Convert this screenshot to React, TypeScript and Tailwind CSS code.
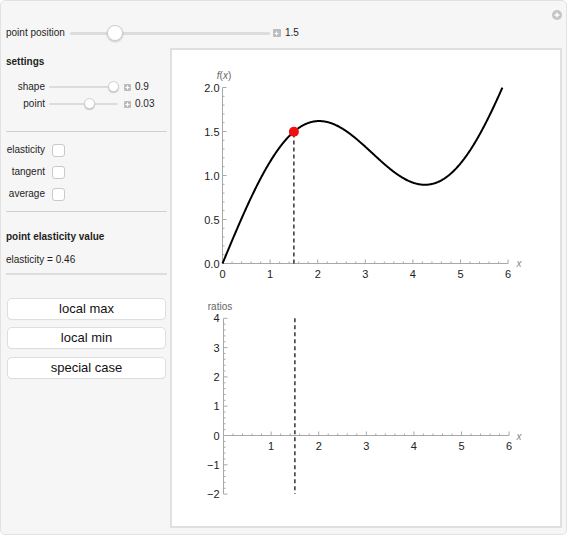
import React from "react";

const f = (x: number) => 0.9 * Math.sin(x) + 0.4 * x;

function Plots() {
  const sx = 47.6;
  const o1x = 50.5, o1y = 213.5, s1y = 88;
  const o2x = 51.5, o2y = 385.5, s2y = 29.3;
  const axis = "#a8a8a8";
  const lab = "#222";
  const els: React.ReactNode[] = [];

  els.push(<line key="p1x" x1={o1x} y1={o1y} x2={o1x + 6 * sx} y2={o1y} stroke={axis} strokeWidth={1} />);
  els.push(<line key="p1y" x1={o1x} y1={o1y} x2={o1x} y2={o1y - 2 * s1y} stroke={axis} strokeWidth={1} />);
  for (let i = 1; i <= 30; i++) {
    const x = o1x + i * 0.2 * sx;
    const major = i % 5 === 0;
    els.push(<line key={"p1xt" + i} x1={x} y1={o1y} x2={x} y2={o1y - (major ? 4 : 2)} stroke={axis} strokeWidth={1} />);
  }
  for (let i = 1; i <= 20; i++) {
    const y = o1y - i * 0.1 * s1y;
    const major = i % 5 === 0;
    els.push(<line key={"p1yt" + i} x1={o1x} y1={y} x2={o1x + (major ? 4 : 2)} y2={y} stroke={axis} strokeWidth={1} />);
  }
  for (let i = 0; i <= 6; i++) {
    els.push(
      <text key={"p1xl" + i} x={o1x + i * sx} y={o1y + 14} textAnchor="middle" fontSize={11} fill={lab}>
        {i}
      </text>
    );
  }
  ["0.0", "0.5", "1.0", "1.5", "2.0"].forEach((t, i) => {
    els.push(
      <text key={"p1yl" + i} x={o1x - 3} y={o1y - i * 0.5 * s1y + 4} textAnchor="end" fontSize={11} fill={lab}>
        {t}
      </text>
    );
  });
  els.push(
    <text key="fx" x={52} y={29} textAnchor="middle" fontSize={10} fill="#666">
      <tspan fontStyle="italic">f</tspan>(<tspan fontStyle="italic">x</tspan>)
    </text>
  );
  els.push(
    <text key="x1" x={347} y={217} textAnchor="middle" fontSize={10} fill="#888" fontStyle="italic">
      x
    </text>
  );

  let d = "";
  for (let i = 0; i <= 600; i++) {
    const x = i * 0.01;
    const y = f(x);
    if (y > 2) break;
    const px = o1x + x * sx;
    const py = o1y - y * s1y;
    d += (i === 0 ? "M" : "L") + px.toFixed(2) + " " + py.toFixed(2) + " ";
  }
  els.push(<path key="curve" d={d} fill="none" stroke="#000" strokeWidth={2} strokeLinejoin="round" />);
  const px15 = o1x + 1.5 * sx;
  const py15 = o1y - f(1.5) * s1y;
  els.push(<line key="dash1" x1={px15} y1={o1y} x2={px15} y2={py15} stroke="#000" strokeWidth={1.2} strokeDasharray="4 3" />);
  els.push(<circle key="dot" cx={px15} cy={py15} r={5} fill="#f01010" />);

  els.push(<line key="p2x" x1={o2x} y1={o2y} x2={o2x + 6 * sx} y2={o2y} stroke={axis} strokeWidth={1} />);
  els.push(<line key="p2y" x1={o2x} y1={o2y + 2 * s2y} x2={o2x} y2={o2y - 4 * s2y} stroke={axis} strokeWidth={1} />);
  for (let i = 1; i <= 30; i++) {
    const x = o2x + i * 0.2 * sx;
    const major = i % 5 === 0;
    els.push(<line key={"p2xt" + i} x1={x} y1={o2y} x2={x} y2={o2y - (major ? 4 : 2)} stroke={axis} strokeWidth={1} />);
  }
  for (let i = -10; i <= 20; i++) {
    if (i === 0) continue;
    const y = o2y - i * 0.2 * s2y;
    const major = i % 5 === 0;
    els.push(<line key={"p2yt" + i} x1={o2x} y1={y} x2={o2x + (major ? 4 : 2)} y2={y} stroke={axis} strokeWidth={1} />);
  }
  for (let i = 1; i <= 6; i++) {
    els.push(
      <text key={"p2xl" + i} x={o2x + i * sx} y={o2y + 14} textAnchor="middle" fontSize={11} fill={lab}>
        {i}
      </text>
    );
  }
  ["\u22122", "\u22121", "0", "1", "2", "3", "4"].forEach((t, i) => {
    els.push(
      <text key={"p2yl" + i} x={o2x - 4} y={o2y - (i - 2) * s2y + 4} textAnchor="end" fontSize={11} fill={lab}>
        {t}
      </text>
    );
  });
  els.push(
    <text key="ratios" x={48} y={260} textAnchor="middle" fontSize={10} fill="#666">
      ratios
    </text>
  );
  els.push(
    <text key="x2" x={347} y={390} textAnchor="middle" fontSize={10} fill="#888" fontStyle="italic">
      x
    </text>
  );
  const p2x15 = o2x + 1.5 * sx;
  els.push(
    <line key="dash2" x1={p2x15} y1={o2y - 4 * s2y} x2={p2x15} y2={o2y + 2 * s2y} stroke="#000" strokeWidth={1.2} strokeDasharray="4 3" />
  );

  return (
    <svg width={388} height={476} viewBox="0 0 388 476" style={{ fontFamily: "'Liberation Sans', Arial, sans-serif" }}>
      {els}
    </svg>
  );
}

function Knob({ size }: { size: number }) {
  return (
    <div
      className={
        size === 16
          ? "w-[16px] h-[16px] rounded-full bg-white border border-[#d0d0d0] shadow-[0_1px_2px_rgba(0,0,0,0.2)]"
          : "w-[11px] h-[11px] rounded-full bg-white border border-[#d0d0d0] shadow-[0_1px_1px_rgba(0,0,0,0.2)]"
      }
    />
  );
}

function PlusBox({ big }: { big?: boolean }) {
  return (
    <div
      className={
        (big ? "w-[8px] h-[8px]" : "w-[7px] h-[7px]") +
        " bg-[#bcbcbc] rounded-[1px] flex items-center justify-center"
      }
    >
      <svg width="5" height="5" viewBox="0 0 5 5">
        <path d="M2.5 0.5V4.5M0.5 2.5H4.5" stroke="#fff" strokeWidth="1.1" />
      </svg>
    </div>
  );
}

function SmallSlider({ label, knobCenter, value }: { label: string; knobCenter: number; value: string }) {
  return (
    <div className="flex items-center h-[12px]">
      <div className="w-[39px] text-right">{label}</div>
      <div className="relative w-[69px] h-[2px] bg-[#dcdcdc] rounded-full ml-[4px]">
        <div className="absolute top-[-5px]" style={{ left: knobCenter - 5.5 }}>
          <Knob size={11} />
        </div>
      </div>
      <div className="ml-[6px]">
        <PlusBox />
      </div>
      <div className="ml-[4px]">{value}</div>
    </div>
  );
}

function CheckRow({ label }: { label: string }) {
  return (
    <div className="flex items-center h-[14px]">
      <div className="w-[39px] text-right">{label}</div>
      <div className="ml-[7px] w-[13px] h-[13px] rounded-[3px] bg-white border border-[#c9c9c9]" />
    </div>
  );
}

function Btn({ children }: { children: React.ReactNode }) {
  return (
    <div className="ml-[2px] w-[157px] h-[20px] rounded-[4px] bg-white shadow-[0_0_0_1px_#dedede,0_1px_1px_rgba(0,0,0,0.12)] flex items-center justify-center text-[13px] text-[#111]">
      {children}
    </div>
  );
}

export default function App() {
  return (
    <div
      className="relative w-[567px] h-[535px] bg-[#f6f6f6] border border-[#e2e2e2] rounded-[5px] text-[10px] text-[#1e1e1e] leading-[12px]"
      style={{ fontFamily: "'Liberation Sans', Arial, sans-serif" }}
    >
      <div className="absolute left-[551px] top-[9px] w-[10px] h-[10px] rounded-full bg-[#c4c4c4] flex items-center justify-center">
        <svg width="6" height="6" viewBox="0 0 6 6">
          <path d="M3 0.5V5.5M0.5 3H5.5" stroke="#fff" strokeWidth="1.4" />
        </svg>
      </div>

      <div className="flex items-center h-[16px] mt-[24px] pl-[5px]">
        <div>point position</div>
        <div className="relative w-[200px] h-[3px] bg-[#dcdcdc] rounded-full ml-[5px]">
          <div className="absolute top-[-6.5px] left-[37px]">
            <Knob size={16} />
          </div>
        </div>
        <div className="ml-[3px]">
          <PlusBox big />
        </div>
        <div className="ml-[4px]">1.5</div>
      </div>

      <div className="flex mt-[7px]">
        <div className="w-[169px] pl-[5px] flex flex-col">
          <div className="h-[12px] mt-[8px] font-bold">settings</div>
          <div className="mt-[13px]">
            <SmallSlider label="shape" knobCenter={64} value="0.9" />
          </div>
          <div className="mt-[5px]">
            <SmallSlider label="point" knobCenter={40} value="0.03" />
          </div>
          <div className="mt-[21px] h-[1px] bg-[#cfcfcf] w-[161px]" />
          <div className="mt-[11px]">
            <CheckRow label="elasticity" />
          </div>
          <div className="mt-[8px]">
            <CheckRow label="tangent" />
          </div>
          <div className="mt-[8px]">
            <CheckRow label="average" />
          </div>
          <div className="mt-[10px] h-[1px] bg-[#cfcfcf] w-[161px]" />
          <div className="mt-[19px] h-[12px] font-bold">point elasticity value</div>
          <div className="mt-[11px] h-[12px]">elasticity = 0.46</div>
          <div className="mt-[7px] h-[2px] bg-[#dddddd] w-[161px]" />
          <div className="mt-[24px]">
            <Btn>local max</Btn>
          </div>
          <div className="mt-[9px]">
            <Btn>local min</Btn>
          </div>
          <div className="mt-[10px]">
            <Btn>special case</Btn>
          </div>
        </div>
        <div className="w-[392px] h-[480px] border-2 border-[#e0e0e0] bg-white">
          <Plots />
        </div>
      </div>
    </div>
  );
}
